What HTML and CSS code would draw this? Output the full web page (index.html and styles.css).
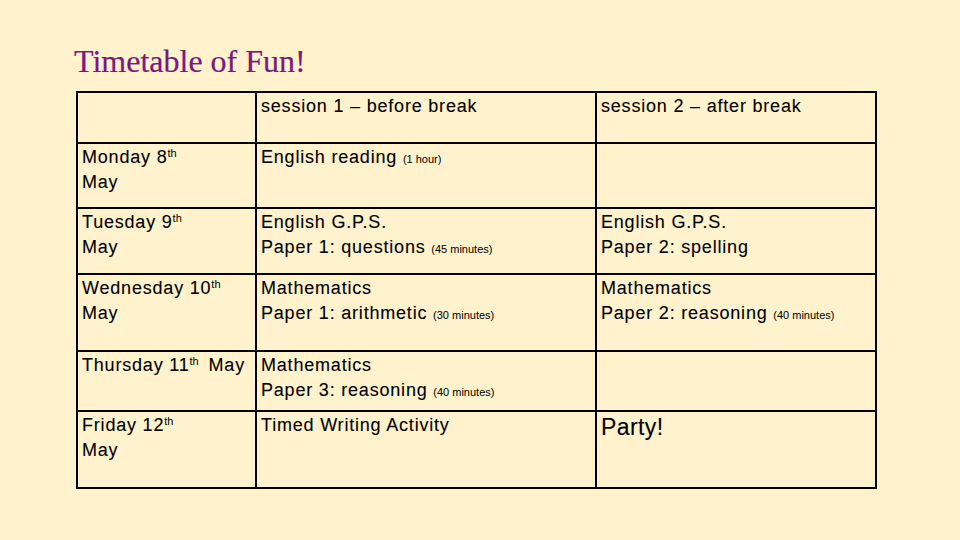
FILE: index.html
```html
<!DOCTYPE html>
<html lang="en">
<head>
<meta charset="utf-8">
<title>Timetable of Fun!</title>
<link rel="stylesheet" href="styles.css">
</head>
<body>
<main class="slide">
  <h1 class="title">Timetable of Fun!</h1>
  <div class="grid" role="table">
    <div class="cell r1"></div>
    <div class="cell r1">session 1 – before break</div>
    <div class="cell r1">session 2 – after break</div>

    <div class="cell r2">Monday 8<sup>th</sup><br>May</div>
    <div class="cell r2">English reading <small>(1 hour)</small></div>
    <div class="cell r2"></div>

    <div class="cell r3">Tuesday 9<sup>th</sup><br>May</div>
    <div class="cell r3">English G.P.S.<br>Paper 1: questions <small>(45 minutes)</small></div>
    <div class="cell r3">English G.P.S.<br>Paper 2: spelling</div>

    <div class="cell r4">Wednesday 10<sup>th</sup><br>May</div>
    <div class="cell r4">Mathematics<br>Paper 1: arithmetic <small>(30 minutes)</small></div>
    <div class="cell r4">Mathematics<br>Paper 2: reasoning <small>(40 minutes)</small></div>

    <div class="cell r5 nowrap">Thursday 11<sup>th</sup> <span class="gap">May</span></div>
    <div class="cell r5">Mathematics<br>Paper 3: reasoning <small>(40 minutes)</small></div>
    <div class="cell r5"></div>

    <div class="cell r6">Friday 12<sup>th</sup><br>May</div>
    <div class="cell r6">Timed Writing Activity</div>
    <div class="cell r6 party">Party!</div>
  </div>
</main>
</body>
</html>
```
FILE: styles.css
```css
html, body {
  margin: 0;
  padding: 0;
  background: #fff2cc;
}
.slide {
  width: 960px;
  height: 540px;
  box-sizing: border-box;
  padding: 41px 0 0 74px;
  background: #fff2cc;
  overflow: hidden;
}
.title {
  margin: 0;
  font-family: "Liberation Serif", "Times New Roman", serif;
  font-weight: normal;
  font-size: 32px;
  line-height: 40px;
  color: #7a1a7c;
  -webkit-text-stroke: 0.2px #7a1a7c;
}
.grid {
  margin: 10px 0 0 2px;
  display: grid;
  grid-template-columns: 179px 340px 280px;
  grid-template-rows: 51px 65px 66px 77px 60px 77px;
  width: max-content;
  border-left: 2px solid #000;
  border-top: 2px solid #000;
  font-family: "Liberation Sans", Arial, sans-serif;
  font-size: 18px;
  line-height: 25px;
  letter-spacing: 0.8px;
  color: #000;
  -webkit-text-stroke: 0.1px #000;
}
.cell {
  box-sizing: border-box;
  border-right: 2px solid #000;
  border-bottom: 2px solid #000;
  padding: 1px 0 0 4px;
}
.nowrap { white-space: nowrap; }
.gap { margin-left: 4px; }
sup {
  font-size: 11px;
  letter-spacing: 0;
  line-height: 0;
  vertical-align: 6px;
  -webkit-text-stroke: 0;
}
small {
  font-size: 11px;
  letter-spacing: 0;
  -webkit-text-stroke: 0;
}
.party {
  font-size: 23px;
  line-height: 29px;
  letter-spacing: 0.4px;
}
```
